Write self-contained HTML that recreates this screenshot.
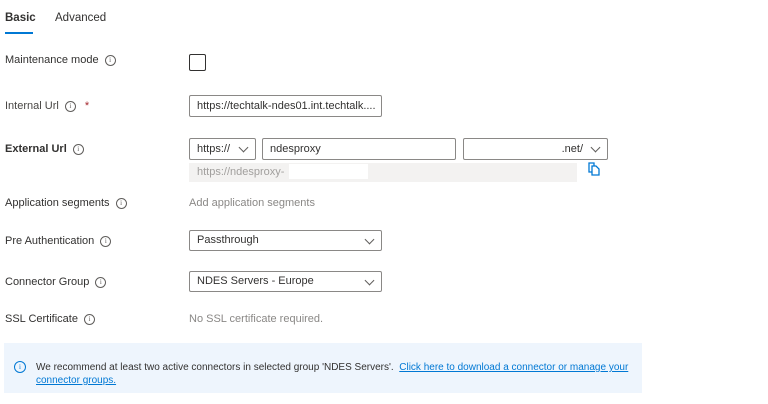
<!DOCTYPE html>
<html><head><style>
body{margin:0;width:768px;height:404px;background:#fff;font-family:"Liberation Sans",sans-serif;font-size:11px;color:#323130;position:relative;overflow:hidden}
.a{position:absolute;white-space:nowrap}
.i{display:inline-block;width:9px;height:9px;border:1px solid #605e5c;border-radius:50%;font-size:7px;line-height:9px;text-align:center;vertical-align:middle;margin-left:6px;color:#605e5c;font-family:"Liberation Serif",serif}
.box{position:absolute;border:1px solid #8a8886;border-radius:2px;box-sizing:border-box;height:22px;line-height:20px;padding-left:7px;background:#fff}
.chev{position:absolute;right:8px;top:5px;width:6px;height:6px;border-right:1px solid #605e5c;border-bottom:1px solid #605e5c;transform:rotate(45deg)}
</style></head><body>
<div class="a" style="left:5px;top:12px;font-weight:bold;font-size:11.5px">Basic</div>
<div class="a" style="left:55px;top:12px;font-size:11.5px">Advanced</div>
<div class="a" style="left:5px;top:32px;width:28px;height:2px;background:#0078d4"></div>

<div class="a" style="left:5px;top:54px">Maintenance mode<span class="i">i</span></div>
<div class="a" style="left:189px;top:54px;width:15px;height:15px;border:1px solid #323130;border-radius:2px"></div>

<div class="a" style="left:5px;top:100px;color:#484644">Internal Url<span class="i">i</span> <span style="color:#a4262c;margin-left:6px">*</span></div>
<div class="box" style="left:189px;top:95px;width:193px">https://techtalk-ndes01.int.techtalk....</div>

<div class="a" style="left:5px;top:143px;font-weight:bold">External Url<span class="i" style="font-weight:normal">i</span></div>
<div class="box" style="left:189px;top:138px;width:67px">https://<span class="chev"></span></div>
<div class="box" style="left:262px;top:138px;width:194px">ndesproxy</div>
<div class="box" style="left:463px;top:138px;width:145px;text-align:right;padding-right:24px">.net/<span class="chev"></span></div>
<div class="a" style="left:189px;top:163px;width:388px;height:19px;background:#f3f2f1;color:#a19f9d;line-height:19px;padding-left:8px;box-sizing:border-box">https://ndesproxy-</div>
<div class="a" style="left:289px;top:164px;width:79px;height:15px;background:#fff"></div>
<svg class="a" style="left:588px;top:162px" width="12" height="14" viewBox="0 0 12 14"><path d="M1 1h5v9H1z" fill="none" stroke="#0078d4" stroke-width="1.3"/><path d="M4 4h4l3 3v6H4z" fill="#fff" stroke="#0078d4" stroke-width="1.3"/></svg>

<div class="a" style="left:5px;top:197px">Application segments<span class="i">i</span></div>
<div class="a" style="left:189px;top:197px;color:#8a8886">Add application segments</div>

<div class="a" style="left:5px;top:235px">Pre Authentication<span class="i">i</span></div>
<div class="box" style="left:189px;top:230px;width:193px;height:21px;line-height:19px">Passthrough<span class="chev"></span></div>

<div class="a" style="left:5px;top:276px">Connector Group<span class="i">i</span></div>
<div class="box" style="left:189px;top:271px;width:193px;height:21px;line-height:19px">NDES Servers - Europe<span class="chev"></span></div>

<div class="a" style="left:5px;top:313px">SSL Certificate<span class="i">i</span></div>
<div class="a" style="left:189px;top:313px;color:#8a8886">No SSL certificate required.</div>

<div class="a" style="left:4px;top:343px;width:638px;height:50px;background:#eef5fd"></div>
<div class="a" style="left:14px;top:361px;width:10px;height:10px;border:1px solid #0078d4;border-radius:50%;font-size:7px;line-height:10px;text-align:center;color:#0078d4;font-family:'Liberation Serif',serif">i</div>
<div class="a" style="left:36px;top:361px;font-size:10px;line-height:13px">We recommend at least two active connectors in selected group 'NDES Servers'.&nbsp; <span style="color:#0078d4;text-decoration:underline">Click here to download a connector or manage your</span><br><span style="color:#0078d4;text-decoration:underline">connector groups.</span></div>
</body></html>
